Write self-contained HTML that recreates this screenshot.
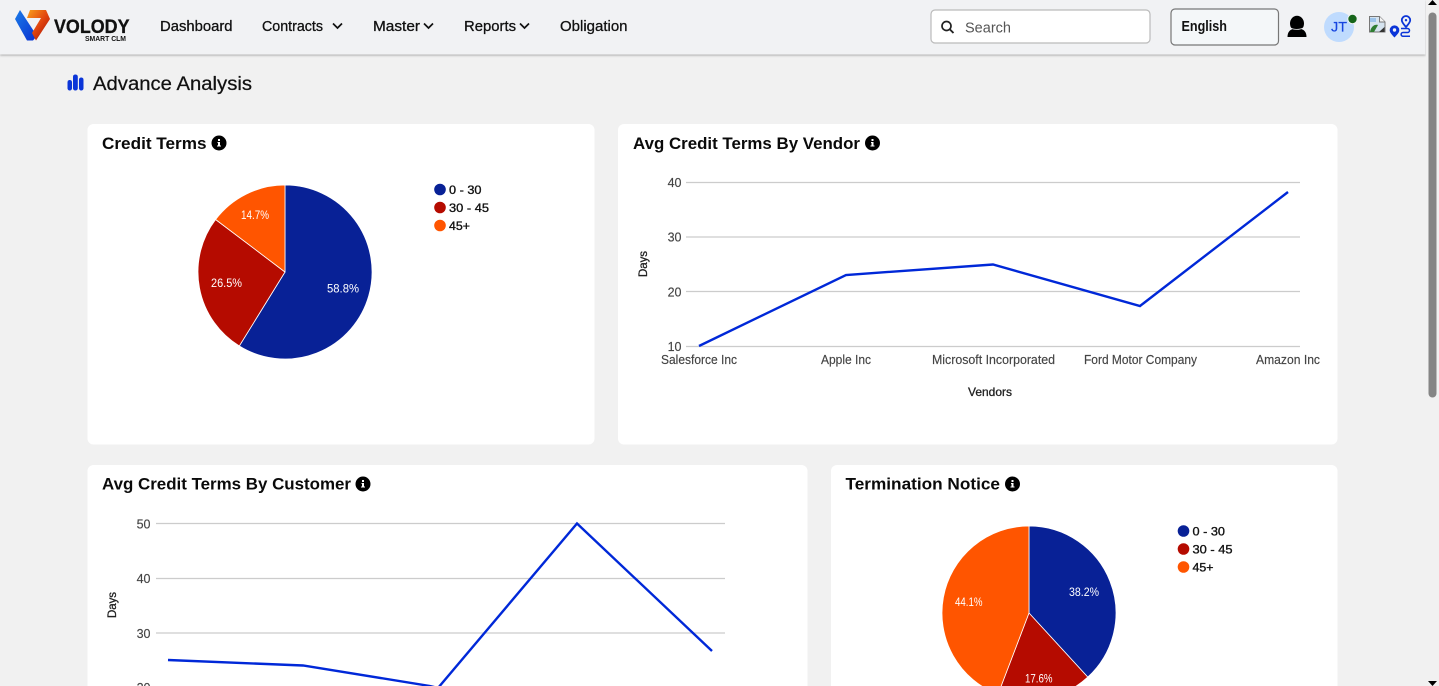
<!DOCTYPE html>
<html lang="en"><head><meta charset="utf-8"><title>Advance Analysis</title>
<style>
html,body{margin:0;padding:0;width:1439px;height:686px;overflow:hidden;background:#f1f1f1}
svg{display:block;font-family:"Liberation Sans",sans-serif}
.n{font-size:15px;fill:#111;font-weight:400;stroke:#111;stroke-width:.3}
.t{font-size:17px;font-weight:700;fill:#0a0a0a}
.l{font-size:12px;fill:#111;stroke:#111;stroke-width:.35}
.p{font-size:11.5px;fill:#fff}
.a{font-size:12.5px;fill:#444;stroke:#444;stroke-width:.15}
.d{font-size:12px;fill:#222;stroke:#222;stroke-width:.3}
</style></head><body>
<svg width="1439" height="686" viewBox="0 0 1439 686" xmlns="http://www.w3.org/2000/svg">
<defs>
<linearGradient id="lb" x1="0" y1="0" x2="1" y2="1"><stop offset="0" stop-color="#1a7be8"/><stop offset="1" stop-color="#0a2fd0"/></linearGradient>
<linearGradient id="lr" x1="0" y1="0" x2="1" y2="1"><stop offset="0" stop-color="#f9a01b"/><stop offset=".5" stop-color="#e2460f"/><stop offset="1" stop-color="#9e0b05"/></linearGradient>
<filter id="sh" x="-2%" y="-20%" width="104%" height="150%"><feDropShadow dx="0" dy="1" stdDeviation="1" flood-color="#000" flood-opacity=".3"/></filter>
</defs>
<rect width="1439" height="686" fill="#f1f1f1"/>

<!-- cards -->
<rect x="87.500" y="124" width="507" height="320.500" rx="6" fill="#fff"/>
<rect x="618" y="124" width="719.500" height="320.500" rx="6" fill="#fff"/>
<rect x="87.500" y="465" width="720" height="240" rx="6" fill="#fff"/>
<rect x="831" y="465" width="506.500" height="240" rx="6" fill="#fff"/>

<!-- header -->
<rect width="1425.500" height="54.500" fill="#f1f2f4" filter="url(#sh)"/>
<polygon points="15,19 20,10 37,36 33,40.500 27,40.500" fill="url(#lb)"/>
<polygon points="30,10 46,10 50,19 36,40.500 32,33 41,18 27,18" fill="url(#lr)"/>
<text x="54" y="33" font-size="19" font-weight="700" fill="#111" stroke="#111" stroke-width=".3" textLength="75.500" lengthAdjust="spacingAndGlyphs">VOLODY</text>
<text x="85" y="41" font-size="7" font-weight="700" fill="#111" textLength="41" lengthAdjust="spacingAndGlyphs">SMART CLM</text>

<text class="n" x="160" y="31" textLength="72.500" lengthAdjust="spacingAndGlyphs">Dashboard</text>
<text class="n" x="262" y="31" textLength="61" lengthAdjust="spacingAndGlyphs">Contracts</text>
<path d="M333 23.500l4.500 4.500 4.500-4.500" fill="none" stroke="#111" stroke-width="1.700"/>
<text class="n" x="373" y="31" textLength="47" lengthAdjust="spacingAndGlyphs">Master</text>
<path d="M424 23.500l4.500 4.500 4.500-4.500" fill="none" stroke="#111" stroke-width="1.700"/>
<text class="n" x="464" y="31" textLength="52" lengthAdjust="spacingAndGlyphs">Reports</text>
<path d="M520 23.500l4.500 4.500 4.500-4.500" fill="none" stroke="#111" stroke-width="1.700"/>
<text class="n" x="560" y="31" textLength="67.500" lengthAdjust="spacingAndGlyphs">Obligation</text>

<!-- search -->
<rect x="931" y="10" width="219" height="33" rx="4" fill="#fff" stroke="#bbb" stroke-width="1.200"/>
<circle cx="946.500" cy="26" r="4.500" fill="none" stroke="#222" stroke-width="1.700"/>
<path d="M950 29.500l3.500 3.500" stroke="#222" stroke-width="1.900"/>
<text x="965" y="32.500" font-size="14.500" fill="#555" textLength="46" lengthAdjust="spacingAndGlyphs">Search</text>

<!-- language -->
<rect x="1171" y="9" width="107.500" height="36" rx="4" fill="#f4f7f9" stroke="#777" stroke-width="1.200"/>
<text x="1181.500" y="31" font-size="15" font-weight="700" fill="#111" textLength="45.500" lengthAdjust="spacingAndGlyphs">English</text>

<!-- agent icon -->
<ellipse cx="1297" cy="23.500" rx="7" ry="7.800" fill="#000"/>
<path d="M1287.500 37c0-5 2.500-7.500 6-8h7c3.500.5 6 3 6 8z" fill="#000"/>
<path d="M1291 28c2 1.800 9 1.800 12 0" stroke="#f1f2f4" stroke-width=".8" fill="none"/>

<!-- avatar -->
<circle cx="1339" cy="27" r="15" fill="#bfdbfe"/>
<text x="1331" y="31.500" font-size="14" fill="#1746e0" stroke="#1746e0" stroke-width=".2" textLength="16" lengthAdjust="spacingAndGlyphs">JT</text>
<circle cx="1352.500" cy="19" r="5.200" fill="#f1f2f4"/><circle cx="1352.500" cy="19" r="4.200" fill="#16651a"/>

<!-- broken image -->
<path d="M1369.500 16.500h10l5.500 5.500v10h-15.500z" fill="#d5e3ef" stroke="#777" stroke-width="1"/>
<path d="M1370 22h6v-4h-6z" fill="#9cc3ea"/>
<path d="M1370 32c1-6 5-8 8-7l-4 7z" fill="#2f7d32"/>
<path d="M1379 32l5.500-5v5z" fill="#333"/>
<path d="M1379.500 16.500v5.500h5.500" fill="#f3f3f3" stroke="#777" stroke-width="1"/>

<!-- route icon -->
<path d="M1406 27c-2.500-3-4.200-4.800-4.200-6.800a4.200 4.200 0 0 1 8.400 0c0 2-1.700 3.800-4.200 6.800z" fill="none" stroke="#0b35d8" stroke-width="1.800"/>
<circle cx="1406" cy="20.200" r="1.200" fill="#0b35d8"/>
<path d="M1401 28.500h6.500a2 2 0 0 1 0 4h-4.500a1.900 1.900 0 0 0 0 3.800h7" fill="none" stroke="#0b35d8" stroke-width="1.500"/>
<path d="M1394.500 37.500c-2.700-3-4.800-5-4.800-7.300a4.800 4.800 0 0 1 9.600 0c0 2.300-2.100 4.300-4.800 7.300z" fill="#0b35d8"/>
<circle cx="1394.500" cy="30" r="1.700" fill="#f1f2f4"/>

<!-- page heading -->
<g fill="#0b35d8">
<rect x="67.500" y="80" width="4.500" height="10.500" rx="2.200"/>
<rect x="73" y="74.500" width="4.800" height="16" rx="2.300"/>
<rect x="79" y="77.500" width="4.500" height="13" rx="2.200"/>
</g>
<text x="93" y="90" font-size="19.500" fill="#111" stroke="#111" stroke-width=".25" textLength="159" lengthAdjust="spacingAndGlyphs">Advance Analysis</text>

<!-- card titles -->
<text class="t" x="102" y="149" textLength="104.500" lengthAdjust="spacingAndGlyphs">Credit Terms</text>
<text class="t" x="633" y="149" textLength="227" lengthAdjust="spacingAndGlyphs">Avg Credit Terms By Vendor</text>
<text class="t" x="102" y="489.500" textLength="249" lengthAdjust="spacingAndGlyphs">Avg Credit Terms By Customer</text>
<text class="t" x="845.500" y="489.500" textLength="154.500" lengthAdjust="spacingAndGlyphs">Termination Notice</text>
<g fill="#000">
<circle cx="219" cy="143" r="7.500"/><circle cx="872.500" cy="143" r="7.500"/><circle cx="363" cy="484" r="7.500"/><circle cx="1012.500" cy="484" r="7.500"/>
</g>
<g fill="#fff">
<path d="M218 139h2v2h-2zM217.500 142h2.500v3.500h1v1h-4v-1h1v-2.500h-.5z"/>
<path d="M871.500 139h2v2h-2zM871 142h2.500v3.500h1v1h-4v-1h1v-2.500h-.5z"/>
<path d="M362 480h2v2h-2zM361.500 483h2.500v3.500h1v1h-4v-1h1v-2.500h-.5z"/>
<path d="M1011.500 480h2v2h-2zM1011 483h2.500v3.500h1v1h-4v-1h1v-2.500h-.5z"/>
</g>

<!-- pie 1 -->
<g stroke="#fff" stroke-width=".8">
<path d="M285 272V185A87 87 0 1 1 239.300 346z" fill="#082196"/>
<path d="M285 272L239.300 346A87 87 0 0 1 215.600 219.500z" fill="#b50b00"/>
<path d="M285 272L215.600 219.500A87 87 0 0 1 285 185z" fill="#ff5500"/>
</g>
<text class="p" x="327" y="292.500" textLength="32" lengthAdjust="spacingAndGlyphs">58.8%</text>
<text class="p" x="211" y="287" textLength="31" lengthAdjust="spacingAndGlyphs">26.5%</text>
<text class="p" x="241" y="219" textLength="28" lengthAdjust="spacingAndGlyphs">14.7%</text>
<circle cx="440" cy="189.500" r="5.800" fill="#082196"/><circle cx="440" cy="207.500" r="5.800" fill="#b50b00"/><circle cx="440" cy="225.500" r="5.800" fill="#ff5500"/>
<text class="l" x="449" y="194" textLength="32.500" lengthAdjust="spacingAndGlyphs">0 - 30</text>
<text class="l" x="449" y="212" textLength="40" lengthAdjust="spacingAndGlyphs">30 - 45</text>
<text class="l" x="449" y="230" textLength="21" lengthAdjust="spacingAndGlyphs">45+</text>

<!-- line chart 1 -->
<g stroke="#ccc" stroke-width="1.200"><path d="M686 182.500h614M686 237h614M686 291.500h614M686 346.500h614"/></g>
<text class="a" x="681.500" y="187" text-anchor="end">40</text>
<text class="a" x="681.500" y="241.500" text-anchor="end">30</text>
<text class="a" x="681.500" y="296.500" text-anchor="end">20</text>
<text class="a" x="681.500" y="351" text-anchor="end">10</text>
<polyline points="699,346 846,275 993,264.500 1140,306 1288,192" fill="none" stroke="#0028d8" stroke-width="2.400"/>
<text class="a" x="661" y="364" textLength="76" lengthAdjust="spacingAndGlyphs">Salesforce Inc</text>
<text class="a" x="821" y="364" textLength="50" lengthAdjust="spacingAndGlyphs">Apple Inc</text>
<text class="a" x="932" y="364" textLength="123" lengthAdjust="spacingAndGlyphs">Microsoft Incorporated</text>
<text class="a" x="1084" y="364" textLength="113" lengthAdjust="spacingAndGlyphs">Ford Motor Company</text>
<text class="a" x="1256" y="364" textLength="64" lengthAdjust="spacingAndGlyphs">Amazon Inc</text>
<text class="d" x="968" y="396" textLength="44" lengthAdjust="spacingAndGlyphs">Vendors</text>
<text class="d" transform="translate(647,277) rotate(-90)" textLength="26" lengthAdjust="spacingAndGlyphs">Days</text>

<!-- line chart 2 -->
<g stroke="#ccc" stroke-width="1.200"><path d="M156 523.500h569M156 578.500h569M156 633h569M156 687.500h569"/></g>
<text class="a" x="150.500" y="528.500" text-anchor="end">50</text>
<text class="a" x="150.500" y="583" text-anchor="end">40</text>
<text class="a" x="150.500" y="638" text-anchor="end">30</text>
<text class="a" x="150.500" y="692" text-anchor="end">20</text>
<polyline points="168,660 303,665.500 430,686 438,688 577,523.500 712,651" fill="none" stroke="#0028d8" stroke-width="2.400"/>
<text class="d" transform="translate(116,618) rotate(-90)" textLength="26" lengthAdjust="spacingAndGlyphs">Days</text>

<!-- pie 2 -->
<g stroke="#fff" stroke-width=".8">
<path d="M1029 613V526A87 87 0 0 1 1087.800 677.100z" fill="#082196"/>
<path d="M1029 613L1087.800 677.100A87 87 0 0 1 998 694.300z" fill="#b50b00"/>
<path d="M1029 613L998 694.300A87 87 0 0 1 1029 526z" fill="#ff5500"/>
</g>
<text class="p" x="1069" y="596" textLength="30" lengthAdjust="spacingAndGlyphs">38.2%</text>
<text class="p" x="955" y="606" textLength="27.500" lengthAdjust="spacingAndGlyphs">44.1%</text>
<text class="p" x="1025" y="682.500" textLength="27.500" lengthAdjust="spacingAndGlyphs">17.6%</text>
<circle cx="1183.500" cy="531" r="5.800" fill="#082196"/><circle cx="1183.500" cy="549" r="5.800" fill="#b50b00"/><circle cx="1183.500" cy="567" r="5.800" fill="#ff5500"/>
<text class="l" x="1192.500" y="535.500" textLength="32.500" lengthAdjust="spacingAndGlyphs">0 - 30</text>
<text class="l" x="1192.500" y="553.500" textLength="40" lengthAdjust="spacingAndGlyphs">30 - 45</text>
<text class="l" x="1192.500" y="571.500" textLength="21" lengthAdjust="spacingAndGlyphs">45+</text>

<!-- scrollbar -->
<rect x="1426" y="0" width="13" height="686" fill="#f1f1f1"/>
<rect x="1428.500" y="12.500" width="8" height="385" rx="4" fill="#858585"/>
<polygon points="1432.500,0 1428,5 1437,5" fill="#000"/>
<polygon points="1428,681 1437,681 1432.500,686" fill="#000"/>
</svg>
</body></html>
